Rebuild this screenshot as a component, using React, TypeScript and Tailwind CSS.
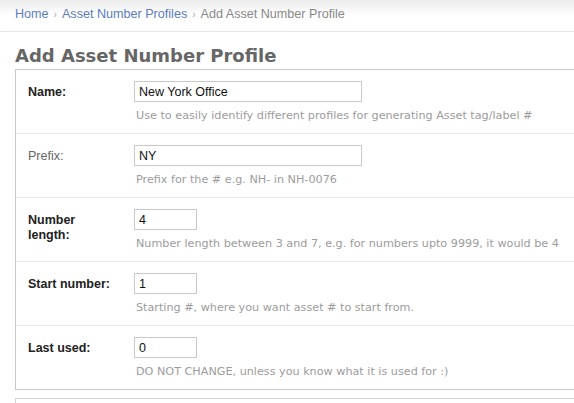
import React from 'react';

type Field = {
    label: React.ReactNode;
    value: string;
    hint: string;
    wide?: boolean;
    bold?: boolean;
};

const fields: Field[] = [
    {
        label: 'Name:',
        value: 'New York Office',
        hint: 'Use to easily identify different profiles for generating Asset tag/label #',
        wide: true,
        bold: true,
    },
    {
        label: 'Prefix:',
        value: 'NY',
        hint: 'Prefix for the # e.g. NH- in NH-0076',
        wide: true,
    },
    {
        label: (
            <>
                Number
                <br />
                length:
            </>
        ),
        value: '4',
        hint: 'Number length between 3 and 7, e.g. for numbers upto 9999, it would be 4',
        bold: true,
    },
    {
        label: 'Start number:',
        value: '1',
        hint: 'Starting #, where you want asset # to start from.',
        bold: true,
    },
    {
        label: 'Last used:',
        value: '0',
        hint: 'DO NOT CHANGE, unless you know what it is used for :)',
        bold: true,
    },
];

const FieldRow = ({ field, last }: { field: Field; last: boolean }) => (
    <div
        className={`flex pl-[12px] pt-[11px] pb-[10px] ${
            last ? '' : 'border-b border-[#e8e8e8]'
        }`}
    >
        <label
            className={`w-[106px] shrink-0 pt-[4px] text-[12.5px] leading-[15px] ${
                field.bold ? 'font-bold text-[#222]' : 'text-[#666]'
            }`}
        >
            {field.label}
        </label>
        <div className="flex flex-col">
            <input
                readOnly
                value={field.value}
                className={`h-[21px] border border-[#c8c8c8] bg-white px-[4px] text-[12.5px] text-[#111] outline-none ${
                    field.wide ? 'w-[228px]' : 'w-[63px]'
                }`}
            />
            <p className="mt-[7px] pl-[2px] font-['DejaVu_Sans',sans-serif] text-[11.2px] leading-[14px] text-[#9c9c9c]">
                {field.hint}
            </p>
        </div>
    </div>
);

export default function App() {
    return (
        <div className="h-[403px] w-[574px] overflow-hidden bg-white font-['Liberation_Sans',Arial,sans-serif]">
            <div className="h-[32px] border-b border-[#e6e6e6] bg-gradient-to-b from-[#ececec] via-white to-white px-[15px] pt-[6px]">
                <div className="text-[12.6px] leading-[16px]">
                    <a className="text-[#5b7cc0]">Home</a>
                    <span className="mx-[5px] text-[10px] text-[#aaa]">›</span>
                    <a className="text-[#5b7cc0]">Asset Number Profiles</a>
                    <span className="mx-[5px] text-[10px] text-[#aaa]">›</span>
                    <span className="text-[#888]">Add Asset Number Profile</span>
                </div>
            </div>

            <h1 className="mt-[12px] px-[15px] font-['DejaVu_Sans',sans-serif] text-[18px] font-bold leading-[24px] text-[#666]">
                Add Asset Number Profile
            </h1>

            <div className="ml-[15px] mt-[1px] w-[600px] border border-[#c8c8c8]">
                {fields.map((f, i) => (
                    <FieldRow key={i} field={f} last={i === fields.length - 1} />
                ))}
            </div>

            <div className="ml-[15px] mt-[8px] h-[40px] w-[600px] border border-[#d4d4d4]" />
        </div>
    );
}
